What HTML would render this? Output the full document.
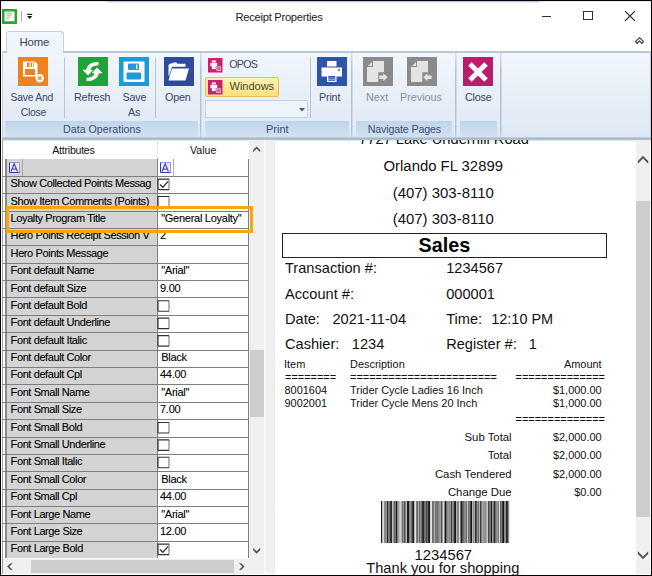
<!DOCTYPE html><html><head><meta charset="utf-8"><style>
html,body{margin:0;padding:0;width:652px;height:576px;overflow:hidden;background:#fff}
body div,body svg{position:absolute}
.t{position:absolute;white-space:nowrap;line-height:1;font-family:"Liberation Sans",sans-serif}
</style></head><body>
<div style="left:0px;top:0px;width:652px;height:576px;background:#fff"></div>
<div style="left:1px;top:1px;width:650px;height:1px;background:#e4e4e4"></div>
<div style="left:108px;top:1px;width:431px;height:1px;background:#b4c4da"></div>
<div style="left:108px;top:2px;width:431px;height:1px;background:#e8eff9"></div>
<svg style="position:absolute;left:2px;top:9px" width="15" height="15" viewBox="0 0 15 15">
<rect x="0" y="0" width="15" height="15" fill="#2ca52c"/>
<rect x="2.5" y="2.5" width="10" height="9.5" fill="#fff"/>
<path d="M2.5 12 l1.25 1 l1.25 -1 l1.25 1 l1.25 -1 l1.25 1 l1.25 -1 l1.25 1 l1.25 -1 V12.6 H2.5z" fill="#fff"/>
<rect x="4.5" y="3.8" width="5" height="1.3" fill="#9ad49a"/>
<rect x="4.5" y="5.6" width="5" height="1.3" fill="#9ad49a"/>
<rect x="4.5" y="7.4" width="3.5" height="1.2" fill="#9ad49a"/>
<rect x="4.5" y="9" width="2" height="1.1" fill="#9ad49a"/>
</svg>
<div style="left:21px;top:11px;width:1px;height:11px;background:#b0b0b0"></div>
<svg style="position:absolute;left:27px;top:13px" width="6" height="7" viewBox="0 0 6 7">
<rect x="0.2" y="0.8" width="5" height="1.1" fill="#111"/><path d="M0.2 3 H5.2 L2.7 6z" fill="#111"/></svg>
<div class="t" style="left:235.5px;top:12.00px;font-size:11.2px;color:#222;letter-spacing:-0.28px">Receipt Properties</div>
<div style="left:542px;top:16px;width:9px;height:1px;background:#333"></div>
<div style="left:583px;top:11px;width:10px;height:9px;border:1px solid #333;box-sizing:border-box"></div>
<svg style="position:absolute;left:624px;top:10px" width="12" height="12" viewBox="0 0 12 12"><path d="M1 1 L11 11 M11 1 L1 11" stroke="#333" stroke-width="1.1"/></svg>
<svg style="position:absolute;left:634px;top:36px" width="11" height="9" viewBox="0 0 11 9"><path d="M5.5 1.6 L1.5 5.7 L3.1 7.4 L5.5 5 L7.9 7.4 L9.5 5.7z" fill="#fff" stroke="#3a4048" stroke-width="1.2" stroke-linejoin="round"/></svg>
<div style="left:6px;top:31px;width:58px;height:22px;background:linear-gradient(#f3f7fc,#eef4fa);border:1px solid #c2d0df;border-bottom:none;border-radius:3px 3px 0 0;box-sizing:border-box"></div>
<div class="t" style="left:19.5px;top:37.00px;font-size:11.4px;color:#33425f;letter-spacing:-0.15px">Home</div>
<div style="left:2px;top:51px;width:649px;height:90px;background:linear-gradient(#f1f6fb 0%,#e9f0f8 40%,#dde8f4 100%);border-top:2px solid #b9c9da;box-sizing:border-box"></div>
<div style="left:64px;top:51px;width:1px;height:0px;"></div>
<div style="left:7px;top:51px;width:56px;height:3px;background:#eff4fa"></div>
<div style="left:2px;top:51px;width:1px;height:90px;background:#c5d2e0"></div>
<div style="left:650px;top:51px;width:1px;height:90px;background:#c5d2e0"></div>
<div style="left:5px;top:121px;width:193px;height:16px;background:linear-gradient(#bfd5ec,#d3e1f1)"></div>
<div style="left:205px;top:121px;width:144px;height:16px;background:linear-gradient(#bfd5ec,#d3e1f1)"></div>
<div style="left:356px;top:121px;width:96px;height:16px;background:linear-gradient(#bfd5ec,#d3e1f1)"></div>
<div style="left:460px;top:121px;width:37px;height:16px;background:linear-gradient(#bfd5ec,#d3e1f1)"></div>
<div style="left:200px;top:53px;width:1px;height:84px;background:linear-gradient(#d5e0ec,#b3c2d3 20%,#b3c2d3 90%,#c0cddc)"></div>
<div style="left:201px;top:53px;width:1px;height:84px;background:linear-gradient(#e5edf6,#cdd9e6 20%,#cdd9e6 90%,#d5e0ec)"></div>
<div style="left:351px;top:53px;width:1px;height:84px;background:linear-gradient(#d5e0ec,#b3c2d3 20%,#b3c2d3 90%,#c0cddc)"></div>
<div style="left:352px;top:53px;width:1px;height:84px;background:linear-gradient(#e5edf6,#cdd9e6 20%,#cdd9e6 90%,#d5e0ec)"></div>
<div style="left:455px;top:53px;width:1px;height:84px;background:linear-gradient(#d5e0ec,#b3c2d3 20%,#b3c2d3 90%,#c0cddc)"></div>
<div style="left:456px;top:53px;width:1px;height:84px;background:linear-gradient(#e5edf6,#cdd9e6 20%,#cdd9e6 90%,#d5e0ec)"></div>
<div style="left:500px;top:53px;width:1px;height:84px;background:linear-gradient(#d5e0ec,#b3c2d3 20%,#b3c2d3 90%,#c0cddc)"></div>
<div style="left:501px;top:53px;width:1px;height:84px;background:linear-gradient(#e5edf6,#cdd9e6 20%,#cdd9e6 90%,#d5e0ec)"></div>
<div style="left:2px;top:137px;width:649px;height:3px;background:linear-gradient(#c5d2e0,#a3b4c8 60%,#b9c6d6)"></div>
<div style="left:64px;top:58px;width:1px;height:60px;background:#b8c4d2"></div>
<div style="left:155px;top:58px;width:1px;height:60px;background:#b8c4d2"></div>
<div style="left:310px;top:58px;width:1px;height:60px;background:#b8c4d2"></div>
<div class="t" style="left:63px;top:124.00px;font-size:10.7px;color:#3f4d6a">Data Operations</div>
<div class="t" style="left:266px;top:124.00px;font-size:11px;color:#3f4d6a">Print</div>
<div class="t" style="left:367.7px;top:124.00px;font-size:10.7px;color:#3f4d6a;letter-spacing:-0.15px">Navigate Pages</div>
<div class="t" style="left:10.5px;top:93.00px;font-size:10.3px;color:#3a4766;letter-spacing:-0.2px">Save And</div>
<div class="t" style="left:20.7px;top:108.00px;font-size:10.3px;color:#3a4766;letter-spacing:-0.2px">Close</div>
<div class="t" style="left:74px;top:92.00px;font-size:10.8px;color:#3a4766;letter-spacing:-0.2px">Refresh</div>
<div class="t" style="left:122.5px;top:92.00px;font-size:10.8px;color:#3a4766;letter-spacing:-0.2px">Save</div>
<div class="t" style="left:128px;top:107.00px;font-size:10.8px;color:#3a4766;letter-spacing:-0.2px">As</div>
<div class="t" style="left:165px;top:92.00px;font-size:10.8px;color:#3a4766;letter-spacing:-0.2px">Open</div>
<div class="t" style="left:319px;top:92.00px;font-size:10.8px;color:#3a4766;letter-spacing:-0.2px">Print</div>
<div class="t" style="left:366px;top:92.00px;font-size:10.8px;color:#8a8f99">Next</div>
<div class="t" style="left:400px;top:92.00px;font-size:10.8px;color:#8a8f99">Previous</div>
<div class="t" style="left:465px;top:92.00px;font-size:10.8px;color:#3a4766;letter-spacing:-0.2px">Close</div>
<svg style="position:absolute;left:18px;top:57px" width="30" height="29" viewBox="0 0 30 29"><rect width="30" height="29" fill="#f0821e"/><path d="M5 4.5 H17 L19.5 7 V19.5 H5z" fill="#fff"/><rect x="7" y="12" width="10" height="6" fill="#f0821e"/>
<rect x="9" y="5.5" width="7" height="4.5" fill="#f0821e"/><rect x="11.5" y="5.5" width="1.3" height="4.5" fill="#fff"/><rect x="14" y="5.5" width="1.3" height="4.5" fill="#fff"/>
<circle cx="21.7" cy="21.2" r="4.2" fill="#fff"/><path d="M20 19.5 L23.4 22.9 M23.4 19.5 L20 22.9" stroke="#f0821e" stroke-width="1.2"/></svg>
<svg style="position:absolute;left:78px;top:57px" width="30" height="29" viewBox="0 0 30 29"><rect width="30" height="29" fill="#22a03a"/><path d="M20.5 5 C14 4.5 8.5 8 8.3 12.8 L4.5 12.8 L10 18.6 L15.2 12.8 L12.6 12.8 C12.8 10.2 15.5 8.6 20.5 8.2z" fill="#fff"/>
<path d="M8.5 24 C15 24.5 20.5 21 20.7 16.2 L24.5 16.2 L19 10.4 L13.8 16.2 L16.4 16.2 C16.2 18.8 13.5 20.4 8.5 20.8z" fill="#fff"/></svg>
<svg style="position:absolute;left:119px;top:57px" width="30" height="29" viewBox="0 0 30 29"><rect width="30" height="29" fill="#1e9ad6"/><rect x="4.5" y="4.5" width="21" height="20.5" rx="0.8" fill="#fff"/><rect x="9" y="6.5" width="11" height="6.5" rx="1" fill="#1e9ad6"/>
<rect x="17" y="7.5" width="1.4" height="4.5" fill="#fff"/><rect x="7.5" y="15.5" width="14.5" height="7" rx="0.8" fill="#1e9ad6"/></svg>
<svg style="position:absolute;left:164px;top:57px" width="30" height="29" viewBox="0 0 30 29"><rect width="30" height="29" fill="#2f4a9c"/><path d="M4.5 8 L6 6.5 L8 6.5 L9 5.5 L12.5 5.5 L13.5 6.8 L21.5 6.8 L21.5 9.8 L8 9.8 L5 19 L4.5 19z" fill="#fff"/>
<path d="M8 11.5 L25 11.5 L21.5 23.5 L4.5 23.5z" fill="#fff"/></svg>
<svg style="position:absolute;left:317px;top:57px" width="30" height="29" viewBox="0 0 30 29"><rect width="30" height="29" fill="#2f55a8"/><rect x="10" y="4" width="9.5" height="5.5" fill="#fff"/><rect x="4.5" y="10.5" width="20.5" height="9" fill="#fff"/>
<circle cx="22" cy="13" r="0.9" fill="#2f55a8"/><rect x="10" y="17.5" width="9.5" height="7.5" fill="#fff"/><rect x="11.3" y="19" width="7" height="4.8" fill="#2f55a8"/>
<rect x="11.3" y="20.5" width="7" height="0.8" fill="#fff" opacity="0.6"/><rect x="11.3" y="22.2" width="7" height="0.8" fill="#fff" opacity="0.6"/></svg>
<svg style="position:absolute;left:363px;top:57px" width="30" height="29" viewBox="0 0 30 29"><rect width="30" height="29" fill="#8a8a8a"/><path d="M10 4 L21 4 L21 15.2 L15.2 15.2 L15.2 25 L4 25 L4 10 L10 10z" fill="#e3e3e3"/><path d="M5 9 L9 5 L9 9z" fill="#e3e3e3"/><path d="M16.2 18.5 L20.3 18.5 L20.3 16.3 L24.6 20.3 L20.3 24.3 L20.3 22.1 L16.2 22.1z" fill="#e3e3e3"/></svg>
<svg style="position:absolute;left:407px;top:57px" width="30" height="29" viewBox="0 0 30 29"><rect width="30" height="29" fill="#8a8a8a"/><path d="M10 4 L21 4 L21 15.2 L15.2 15.2 L15.2 25 L4 25 L4 10 L10 10z" fill="#e3e3e3"/><path d="M5 9 L9 5 L9 9z" fill="#e3e3e3"/><path d="M24.6 18.5 L20.5 18.5 L20.5 16.3 L16.2 20.3 L20.5 24.3 L20.5 22.1 L24.6 22.1z" fill="#e3e3e3"/></svg>
<svg style="position:absolute;left:463px;top:57px" width="30" height="29" viewBox="0 0 30 29"><rect width="30" height="29" fill="#b81d6e"/><path d="M7 7 L23 23 M23 7 L7 23" stroke="#fff" stroke-width="5"/></svg>
<div style="left:205px;top:77px;width:74px;height:20px;background:linear-gradient(#fff3b0,#fddf7e);border:1px solid #e2bf5c;border-radius:2px;box-sizing:border-box"></div>
<svg style="position:absolute;left:208px;top:58px" width="14.5" height="14.5" viewBox="0 0 15 15"><rect width="15" height="15" fill="#cc1f6e"/>
<rect x="4" y="2.5" width="4" height="2" fill="#fff"/><rect x="2.5" y="5" width="7" height="3.5" fill="#fff"/><rect x="4" y="8.5" width="4" height="3" fill="#fff"/>
<rect x="8.5" y="8.5" width="5" height="5" fill="#e6a6c6"/><rect x="9.5" y="9.5" width="3" height="3" fill="#cc1f6e" opacity="0.5"/></svg>
<svg style="position:absolute;left:208px;top:80px" width="14.5" height="14.5" viewBox="0 0 15 15"><rect width="15" height="15" fill="#cc1f6e"/>
<rect x="4" y="2.5" width="4" height="2" fill="#fff"/><rect x="2.5" y="5" width="7" height="3.5" fill="#fff"/><rect x="4" y="8.5" width="4" height="3" fill="#fff"/>
<rect x="8.5" y="8.5" width="5" height="5" fill="#e6a6c6"/><rect x="9.5" y="9.5" width="3" height="3" fill="#cc1f6e" opacity="0.5"/></svg>
<div class="t" style="left:229.3px;top:59.00px;font-size:10.7px;color:#3a4766;letter-spacing:-0.8px">OPOS</div>
<div class="t" style="left:229.5px;top:81.00px;font-size:11px;color:#3b4a3a">Windows</div>
<div style="left:205px;top:100px;width:103px;height:18px;background:#eef4fb;border:1px solid #c3d1e0;box-sizing:border-box"></div>
<svg style="position:absolute;left:299px;top:108px" width="6" height="4" viewBox="0 0 6 4"><path d="M0 0 H6 L3 3.5z" fill="#555"/></svg>
<div style="left:2px;top:140px;width:1px;height:434px;background:#a0a0a0"></div>
<div class="t" style="left:52.3px;top:145.00px;font-size:10.6px;color:#111;letter-spacing:-0.25px">Attributes</div>
<div class="t" style="left:190px;top:145.00px;font-size:10.6px;color:#111">Value</div>
<div style="left:157px;top:140px;width:1px;height:19px;background:#e5e5e5"></div>
<div style="left:7px;top:159px;width:150px;height:399px;background:#d4d4d4"></div>
<div style="left:158px;top:159px;width:91px;height:399px;background:#fff"></div>
<div style="left:5px;top:159px;width:2px;height:399px;background:#8a8a8a"></div>
<div style="left:22px;top:159px;width:1px;height:17px;background:#a8a8a8"></div>
<div style="left:157px;top:159px;width:1px;height:399px;background:#7f7f7f"></div>
<div style="left:248px;top:159px;width:1px;height:399px;background:#7f7f7f"></div>
<div style="left:173px;top:159px;width:1px;height:17px;background:#b0b0b0"></div>
<div style="left:3px;top:176px;width:246px;height:1px;background:#7f7f7f"></div>
<div style="left:3px;top:193px;width:246px;height:1px;background:#7f7f7f"></div>
<div style="left:3px;top:211px;width:246px;height:1px;background:#7f7f7f"></div>
<div style="left:3px;top:228px;width:246px;height:1px;background:#7f7f7f"></div>
<div style="left:3px;top:245px;width:246px;height:1px;background:#7f7f7f"></div>
<div style="left:3px;top:263px;width:246px;height:1px;background:#7f7f7f"></div>
<div style="left:3px;top:280px;width:246px;height:1px;background:#7f7f7f"></div>
<div style="left:3px;top:297px;width:246px;height:1px;background:#7f7f7f"></div>
<div style="left:3px;top:315px;width:246px;height:1px;background:#7f7f7f"></div>
<div style="left:3px;top:332px;width:246px;height:1px;background:#7f7f7f"></div>
<div style="left:3px;top:350px;width:246px;height:1px;background:#7f7f7f"></div>
<div style="left:3px;top:367px;width:246px;height:1px;background:#7f7f7f"></div>
<div style="left:3px;top:384px;width:246px;height:1px;background:#7f7f7f"></div>
<div style="left:3px;top:402px;width:246px;height:1px;background:#7f7f7f"></div>
<div style="left:3px;top:419px;width:246px;height:1px;background:#7f7f7f"></div>
<div style="left:3px;top:437px;width:246px;height:1px;background:#7f7f7f"></div>
<div style="left:3px;top:454px;width:246px;height:1px;background:#7f7f7f"></div>
<div style="left:3px;top:471px;width:246px;height:1px;background:#7f7f7f"></div>
<div style="left:3px;top:489px;width:246px;height:1px;background:#7f7f7f"></div>
<div style="left:3px;top:506px;width:246px;height:1px;background:#7f7f7f"></div>
<div style="left:3px;top:523px;width:246px;height:1px;background:#7f7f7f"></div>
<div style="left:3px;top:541px;width:246px;height:1px;background:#7f7f7f"></div>
<svg style="position:absolute;left:9px;top:162px" width="11" height="11" viewBox="0 0 11 11"><rect x="0" y="0" width="11" height="11" fill="#ecece6"/><path d="M0.5 0.5 H10.5 V10.5" stroke="#9a9ae0" stroke-width="1" fill="none"/><path d="M0.5 0.5 V10.5 H10.5" stroke="#3a3aa8" stroke-width="1" fill="none"/><path d="M2 9.5 L5.2 1.8 L8.4 9.5 M3.2 7.2 H7.2" stroke="#5050d0" stroke-width="1.3" fill="none"/></svg>
<svg style="position:absolute;left:160px;top:162px" width="11" height="11" viewBox="0 0 11 11"><rect x="0" y="0" width="11" height="11" fill="#ecece6"/><path d="M0.5 0.5 H10.5 V10.5" stroke="#9a9ae0" stroke-width="1" fill="none"/><path d="M0.5 0.5 V10.5 H10.5" stroke="#3a3aa8" stroke-width="1" fill="none"/><path d="M2 9.5 L5.2 1.8 L8.4 9.5 M3.2 7.2 H7.2" stroke="#5050d0" stroke-width="1.3" fill="none"/></svg>
<div class="t" style="left:10.6px;top:178.00px;font-size:11px;color:#000;letter-spacing:-0.4px;-webkit-text-stroke:0.1px #000">Show Collected Points Messag</div>
<svg style="position:absolute;left:0;top:0" width="652" height="576" viewBox="0 0 652 576"><path d="M169 179.12 V189.62" stroke="#777" stroke-width="1.1" fill="none"/><path d="M158 189.62 V179.12 H169 M158 189.62 H169" stroke="#333" stroke-width="1.15" fill="none"/><path d="M160 184.42 L162.8 187.22 L168.2 181.42" stroke="#333" stroke-width="1.3" fill="none"/></svg>
<div class="t" style="left:10.6px;top:196.00px;font-size:11px;color:#000;letter-spacing:-0.4px;-webkit-text-stroke:0.1px #000">Show Item Comments (Points)</div>
<svg style="position:absolute;left:0;top:0" width="652" height="576" viewBox="0 0 652 576"><path d="M169 196.50 V207.00" stroke="#777" stroke-width="1.1" fill="none"/><path d="M158 207.00 V196.50 H169 M158 207.00 H169" stroke="#333" stroke-width="1.15" fill="none"/></svg>
<div class="t" style="left:10.6px;top:213.00px;font-size:11px;color:#000;letter-spacing:-0.4px;-webkit-text-stroke:0.1px #000">Loyalty Program Title</div>
<div class="t" style="left:161.2px;top:213.00px;font-size:11px;color:#000;letter-spacing:-0.27px;-webkit-text-stroke:0.1px #000">&quot;General Loyalty&quot;</div>
<div class="t" style="left:10.6px;top:230.00px;font-size:11px;color:#000;letter-spacing:-0.4px;-webkit-text-stroke:0.1px #000">Hero Points Receipt Session V</div>
<div class="t" style="left:160px;top:230.00px;font-size:11px;color:#000;letter-spacing:-0.27px;-webkit-text-stroke:0.1px #000">2</div>
<div class="t" style="left:10.6px;top:248.00px;font-size:11px;color:#000;letter-spacing:-0.4px;-webkit-text-stroke:0.1px #000">Hero Points Message</div>
<div class="t" style="left:10.6px;top:265.00px;font-size:11px;color:#000;letter-spacing:-0.4px;-webkit-text-stroke:0.1px #000">Font default Name</div>
<div class="t" style="left:161.2px;top:265.00px;font-size:11px;color:#000;letter-spacing:-0.27px;-webkit-text-stroke:0.1px #000">&quot;Arial&quot;</div>
<div class="t" style="left:10.6px;top:283.00px;font-size:11px;color:#000;letter-spacing:-0.4px;-webkit-text-stroke:0.1px #000">Font default Size</div>
<div class="t" style="left:160px;top:283.00px;font-size:11px;color:#000;letter-spacing:-0.27px;-webkit-text-stroke:0.1px #000">9.00</div>
<div class="t" style="left:10.6px;top:300.00px;font-size:11px;color:#000;letter-spacing:-0.4px;-webkit-text-stroke:0.1px #000">Font default Bold</div>
<svg style="position:absolute;left:0;top:0" width="652" height="576" viewBox="0 0 652 576"><path d="M169 300.79 V311.29" stroke="#777" stroke-width="1.1" fill="none"/><path d="M158 311.29 V300.79 H169 M158 311.29 H169" stroke="#333" stroke-width="1.15" fill="none"/></svg>
<div class="t" style="left:10.6px;top:317.00px;font-size:11px;color:#000;letter-spacing:-0.4px;-webkit-text-stroke:0.1px #000">Font default Underline</div>
<svg style="position:absolute;left:0;top:0" width="652" height="576" viewBox="0 0 652 576"><path d="M169 318.17 V328.67" stroke="#777" stroke-width="1.1" fill="none"/><path d="M158 328.67 V318.17 H169 M158 328.67 H169" stroke="#333" stroke-width="1.15" fill="none"/></svg>
<div class="t" style="left:10.6px;top:335.00px;font-size:11px;color:#000;letter-spacing:-0.4px;-webkit-text-stroke:0.1px #000">Font default Italic</div>
<svg style="position:absolute;left:0;top:0" width="652" height="576" viewBox="0 0 652 576"><path d="M169 335.55 V346.05" stroke="#777" stroke-width="1.1" fill="none"/><path d="M158 346.05 V335.55 H169 M158 346.05 H169" stroke="#333" stroke-width="1.15" fill="none"/></svg>
<div class="t" style="left:10.6px;top:352.00px;font-size:11px;color:#000;letter-spacing:-0.4px;-webkit-text-stroke:0.1px #000">Font default Color</div>
<div class="t" style="left:161.2px;top:352.00px;font-size:11px;color:#000;letter-spacing:-0.27px;-webkit-text-stroke:0.1px #000">Black</div>
<div class="t" style="left:10.6px;top:369.00px;font-size:11px;color:#000;letter-spacing:-0.4px;-webkit-text-stroke:0.1px #000">Font default Cpl</div>
<div class="t" style="left:160px;top:369.00px;font-size:11px;color:#000;letter-spacing:-0.27px;-webkit-text-stroke:0.1px #000">44.00</div>
<div class="t" style="left:10.6px;top:387.00px;font-size:11px;color:#000;letter-spacing:-0.4px;-webkit-text-stroke:0.1px #000">Font Small Name</div>
<div class="t" style="left:161.2px;top:387.00px;font-size:11px;color:#000;letter-spacing:-0.27px;-webkit-text-stroke:0.1px #000">&quot;Arial&quot;</div>
<div class="t" style="left:10.6px;top:404.00px;font-size:11px;color:#000;letter-spacing:-0.4px;-webkit-text-stroke:0.1px #000">Font Small Size</div>
<div class="t" style="left:160px;top:404.00px;font-size:11px;color:#000;letter-spacing:-0.27px;-webkit-text-stroke:0.1px #000">7.00</div>
<div class="t" style="left:10.6px;top:422.00px;font-size:11px;color:#000;letter-spacing:-0.4px;-webkit-text-stroke:0.1px #000">Font Small Bold</div>
<svg style="position:absolute;left:0;top:0" width="652" height="576" viewBox="0 0 652 576"><path d="M169 422.45 V432.95" stroke="#777" stroke-width="1.1" fill="none"/><path d="M158 432.95 V422.45 H169 M158 432.95 H169" stroke="#333" stroke-width="1.15" fill="none"/></svg>
<div class="t" style="left:10.6px;top:439.00px;font-size:11px;color:#000;letter-spacing:-0.4px;-webkit-text-stroke:0.1px #000">Font Small Underline</div>
<svg style="position:absolute;left:0;top:0" width="652" height="576" viewBox="0 0 652 576"><path d="M169 439.84 V450.34" stroke="#777" stroke-width="1.1" fill="none"/><path d="M158 450.34 V439.84 H169 M158 450.34 H169" stroke="#333" stroke-width="1.15" fill="none"/></svg>
<div class="t" style="left:10.6px;top:456.00px;font-size:11px;color:#000;letter-spacing:-0.4px;-webkit-text-stroke:0.1px #000">Font Small Italic</div>
<svg style="position:absolute;left:0;top:0" width="652" height="576" viewBox="0 0 652 576"><path d="M169 457.22 V467.72" stroke="#777" stroke-width="1.1" fill="none"/><path d="M158 467.72 V457.22 H169 M158 467.72 H169" stroke="#333" stroke-width="1.15" fill="none"/></svg>
<div class="t" style="left:10.6px;top:474.00px;font-size:11px;color:#000;letter-spacing:-0.4px;-webkit-text-stroke:0.1px #000">Font Small Color</div>
<div class="t" style="left:161.2px;top:474.00px;font-size:11px;color:#000;letter-spacing:-0.27px;-webkit-text-stroke:0.1px #000">Black</div>
<div class="t" style="left:10.6px;top:491.00px;font-size:11px;color:#000;letter-spacing:-0.4px;-webkit-text-stroke:0.1px #000">Font Small Cpl</div>
<div class="t" style="left:160px;top:491.00px;font-size:11px;color:#000;letter-spacing:-0.27px;-webkit-text-stroke:0.1px #000">44.00</div>
<div class="t" style="left:10.6px;top:509.00px;font-size:11px;color:#000;letter-spacing:-0.4px;-webkit-text-stroke:0.1px #000">Font Large Name</div>
<div class="t" style="left:161.2px;top:509.00px;font-size:11px;color:#000;letter-spacing:-0.27px;-webkit-text-stroke:0.1px #000">&quot;Arial&quot;</div>
<div class="t" style="left:10.6px;top:526.00px;font-size:11px;color:#000;letter-spacing:-0.4px;-webkit-text-stroke:0.1px #000">Font Large Size</div>
<div class="t" style="left:160px;top:526.00px;font-size:11px;color:#000;letter-spacing:-0.27px;-webkit-text-stroke:0.1px #000">12.00</div>
<div class="t" style="left:10.6px;top:543.00px;font-size:11px;color:#000;letter-spacing:-0.4px;-webkit-text-stroke:0.1px #000">Font Large Bold</div>
<svg style="position:absolute;left:0;top:0" width="652" height="576" viewBox="0 0 652 576"><path d="M169 544.12 V554.62" stroke="#777" stroke-width="1.1" fill="none"/><path d="M158 554.62 V544.12 H169 M158 554.62 H169" stroke="#333" stroke-width="1.15" fill="none"/><path d="M160 549.42 L162.8 552.22 L168.2 546.42" stroke="#333" stroke-width="1.3" fill="none"/></svg>
<div style="left:249px;top:140px;width:15px;height:434px;background:#f0f0f0"></div>
<div style="left:250px;top:350px;width:14px;height:67px;background:#cdcdcd"></div>
<svg style="position:absolute;left:0;top:0" width="652" height="576" viewBox="0 0 652 576"><path d="M256.65 146.40 L260.20 149.95 L260.20 152.25 L256.65 148.70 L253.10 152.25 L253.10 149.95z" fill="#555"/></svg>
<svg style="position:absolute;left:0;top:0" width="652" height="576" viewBox="0 0 652 576"><path d="M256.65 553.70 L260.20 550.15 L260.20 547.75 L256.65 551.30 L253.10 547.75 L253.10 550.15z" fill="#555"/></svg>
<div style="left:3px;top:559px;width:246px;height:15px;background:#f0f0f0"></div>
<div style="left:31px;top:560px;width:203px;height:13px;background:#cdcdcd"></div>
<svg style="position:absolute;left:0;top:0" width="652" height="576" viewBox="0 0 652 576"><path d="M7.10 566.60 L10.55 563.15 L12.75 563.15 L9.30 566.60 L12.75 570.05 L10.55 570.05z" fill="#555"/></svg>
<svg style="position:absolute;left:0;top:0" width="652" height="576" viewBox="0 0 652 576"><path d="M244.60 566.60 L241.15 563.15 L238.95 563.15 L242.40 566.60 L238.95 570.05 L241.15 570.05z" fill="#555"/></svg>
<div style="left:6px;top:206px;width:247px;height:27px;border:3px solid #f6a70f;box-sizing:border-box"></div>
<div style="left:264px;top:140px;width:2px;height:434px;background:#f8f8f8"></div>
<div style="left:266px;top:140px;width:9px;height:434px;background:linear-gradient(90deg,#f0f0f0 70%,#ebebeb)"></div>
<div style="left:0;top:140px;width:652px;height:436px;overflow:hidden"><div style="position:absolute;left:0;top:-140px;width:652px;height:576px">
<div class="t" style="left:144px;width:600px;text-align:center;top:132.00px;font-size:14.7px;color:#111">7727 Lake Underhill Road</div>
<div class="t" style="left:143.25px;width:600px;text-align:center;top:159.00px;font-size:14.9px;color:#111">Orlando FL 32899</div>
<div class="t" style="left:143.25px;width:600px;text-align:center;top:186.00px;font-size:14.95px;color:#111">(407) 303-8110</div>
<div class="t" style="left:143.25px;width:600px;text-align:center;top:212.00px;font-size:14.95px;color:#111">(407) 303-8110</div>
<div style="left:282px;top:233px;width:325px;height:25px;border:1.5px solid #222;box-sizing:border-box"></div>
<div class="t" style="left:144.3px;width:600px;text-align:center;top:236.00px;font-size:19.8px;color:#000;font-weight:bold">Sales</div>
<div class="t" style="left:285px;top:261.00px;font-size:14.6px;color:#111">Transaction #:</div>
<div class="t" style="left:446.2px;top:261.00px;font-size:14.6px;color:#111">1234567</div>
<div class="t" style="left:285px;top:287.00px;font-size:14.6px;color:#111">Account #:</div>
<div class="t" style="left:446.2px;top:287.00px;font-size:14.6px;color:#111">000001</div>
<div class="t" style="left:285px;top:312.00px;font-size:14.6px;color:#111">Date:</div>
<div class="t" style="left:332.5px;top:312.00px;font-size:14.6px;color:#111">2021-11-04</div>
<div class="t" style="left:446.2px;top:312.00px;font-size:14.6px;color:#111">Time:</div>
<div class="t" style="left:491.3px;top:312.00px;font-size:14.45px;color:#111">12:10 PM</div>
<div class="t" style="left:285px;top:337.00px;font-size:14.6px;color:#111">Cashier:</div>
<div class="t" style="left:351.8px;top:337.00px;font-size:14.6px;color:#111">1234</div>
<div class="t" style="left:446.2px;top:337.00px;font-size:14.6px;color:#111">Register #:</div>
<div class="t" style="left:528.8px;top:337.00px;font-size:14.6px;color:#111">1</div>
<div class="t" style="left:284px;top:359.00px;font-size:10.95px;color:#111">Item</div>
<div class="t" style="left:350px;top:359.00px;font-size:10.95px;color:#111">Description</div>
<div class="t" style="right:50.39999999999998px;top:359.00px;font-size:10.95px;color:#111">Amount</div>
<div class="t" style="left:285px;top:372.00px;font-size:10.95px;color:#111">========</div>
<div class="t" style="left:350px;top:372.00px;font-size:10.95px;color:#111">=======================</div>
<div class="t" style="right:47px;top:372.00px;font-size:10.95px;color:#111">==============</div>
<div class="t" style="left:284.5px;top:385.00px;font-size:10.95px;color:#111">8001604</div>
<div class="t" style="left:350px;top:385.00px;font-size:10.95px;color:#111">Trider Cycle Ladies 16 Inch</div>
<div class="t" style="right:50.39999999999998px;top:385.00px;font-size:10.95px;color:#111">$1,000.00</div>
<div class="t" style="left:284.5px;top:398.00px;font-size:10.95px;color:#111">9002001</div>
<div class="t" style="left:350px;top:398.00px;font-size:10.95px;color:#111">Trider Cycle Mens 20 Inch</div>
<div class="t" style="right:50.39999999999998px;top:398.00px;font-size:10.95px;color:#111">$1,000.00</div>
<div class="t" style="right:47px;top:414.00px;font-size:10.95px;color:#111">==============</div>
<div class="t" style="right:140.39999999999998px;top:432.00px;font-size:11.35px;color:#111">Sub Total</div>
<div class="t" style="right:50.39999999999998px;top:432.00px;font-size:10.95px;color:#111">$2,000.00</div>
<div class="t" style="right:140.39999999999998px;top:450.00px;font-size:11.35px;color:#111">Total</div>
<div class="t" style="right:50.39999999999998px;top:450.00px;font-size:10.95px;color:#111">$2,000.00</div>
<div class="t" style="right:140.39999999999998px;top:469.00px;font-size:11.35px;color:#111">Cash Tendered</div>
<div class="t" style="right:50.39999999999998px;top:469.00px;font-size:10.95px;color:#111">$2,000.00</div>
<div class="t" style="right:140.39999999999998px;top:487.00px;font-size:11.35px;color:#111">Change Due</div>
<div class="t" style="right:50.39999999999998px;top:487.00px;font-size:10.95px;color:#111">$0.00</div>
<svg style="position:absolute;left:381px;top:501px" width="129" height="42" viewBox="0 0 129 42" shape-rendering="crispEdges"><rect x="0" y="0" width="1" height="42" fill="rgb(30,30,30)"/><rect x="1" y="0" width="1" height="42" fill="rgb(190,190,190)"/><rect x="2" y="0" width="1" height="42" fill="rgb(220,220,220)"/><rect x="3" y="0" width="1" height="42" fill="rgb(140,140,140)"/><rect x="4" y="0" width="1" height="42" fill="rgb(130,130,130)"/><rect x="5" y="0" width="1" height="42" fill="rgb(150,150,150)"/><rect x="6" y="0" width="1" height="42" fill="rgb(40,40,40)"/><rect x="7" y="0" width="1" height="42" fill="rgb(130,130,130)"/><rect x="8" y="0" width="1" height="42" fill="rgb(110,110,110)"/><rect x="9" y="0" width="1" height="42" fill="rgb(60,60,60)"/><rect x="10" y="0" width="1" height="42" fill="rgb(40,40,40)"/><rect x="11" y="0" width="1" height="42" fill="rgb(190,190,190)"/><rect x="12" y="0" width="1" height="42" fill="rgb(150,150,150)"/><rect x="13" y="0" width="1" height="42" fill="rgb(100,100,100)"/><rect x="14" y="0" width="1" height="42" fill="rgb(120,120,120)"/><rect x="15" y="0" width="1" height="42" fill="rgb(30,30,30)"/><rect x="16" y="0" width="1" height="42" fill="rgb(130,130,130)"/><rect x="17" y="0" width="1" height="42" fill="rgb(160,160,160)"/><rect x="18" y="0" width="1" height="42" fill="rgb(190,190,190)"/><rect x="19" y="0" width="1" height="42" fill="rgb(210,210,210)"/><rect x="20" y="0" width="1" height="42" fill="rgb(180,180,180)"/><rect x="21" y="0" width="1" height="42" fill="rgb(110,110,110)"/><rect x="22" y="0" width="1" height="42" fill="rgb(150,150,150)"/><rect x="23" y="0" width="1" height="42" fill="rgb(80,80,80)"/><rect x="24" y="0" width="1" height="42" fill="rgb(130,130,130)"/><rect x="25" y="0" width="1" height="42" fill="rgb(190,190,190)"/><rect x="26" y="0" width="1" height="42" fill="rgb(30,30,30)"/><rect x="27" y="0" width="1" height="42" fill="rgb(30,30,30)"/><rect x="28" y="0" width="1" height="42" fill="rgb(130,130,130)"/><rect x="29" y="0" width="1" height="42" fill="rgb(150,150,150)"/><rect x="30" y="0" width="1" height="42" fill="rgb(110,110,110)"/><rect x="31" y="0" width="1" height="42" fill="rgb(60,60,60)"/><rect x="32" y="0" width="1" height="42" fill="rgb(30,30,30)"/><rect x="33" y="0" width="1" height="42" fill="rgb(180,180,180)"/><rect x="34" y="0" width="1" height="42" fill="rgb(230,230,230)"/><rect x="35" y="0" width="1" height="42" fill="rgb(130,130,130)"/><rect x="36" y="0" width="1" height="42" fill="rgb(110,110,110)"/><rect x="37" y="0" width="1" height="42" fill="rgb(170,170,170)"/><rect x="38" y="0" width="1" height="42" fill="rgb(110,110,110)"/><rect x="39" y="0" width="1" height="42" fill="rgb(140,140,140)"/><rect x="40" y="0" width="1" height="42" fill="rgb(120,120,120)"/><rect x="41" y="0" width="1" height="42" fill="rgb(50,50,50)"/><rect x="42" y="0" width="1" height="42" fill="rgb(40,40,40)"/><rect x="43" y="0" width="1" height="42" fill="rgb(110,110,110)"/><rect x="44" y="0" width="1" height="42" fill="rgb(120,120,120)"/><rect x="45" y="0" width="1" height="42" fill="rgb(70,70,70)"/><rect x="46" y="0" width="1" height="42" fill="rgb(110,110,110)"/><rect x="47" y="0" width="1" height="42" fill="rgb(40,40,40)"/><rect x="48" y="0" width="1" height="42" fill="rgb(30,30,30)"/><rect x="49" y="0" width="1" height="42" fill="rgb(210,210,210)"/><rect x="50" y="0" width="1" height="42" fill="rgb(230,230,230)"/><rect x="51" y="0" width="1" height="42" fill="rgb(110,110,110)"/><rect x="52" y="0" width="1" height="42" fill="rgb(120,120,120)"/><rect x="53" y="0" width="1" height="42" fill="rgb(170,170,170)"/><rect x="54" y="0" width="1" height="42" fill="rgb(120,120,120)"/><rect x="55" y="0" width="1" height="42" fill="rgb(120,120,120)"/><rect x="56" y="0" width="1" height="42" fill="rgb(110,110,110)"/><rect x="57" y="0" width="1" height="42" fill="rgb(130,130,130)"/><rect x="58" y="0" width="1" height="42" fill="rgb(150,150,150)"/><rect x="59" y="0" width="1" height="42" fill="rgb(160,160,160)"/><rect x="60" y="0" width="1" height="42" fill="rgb(80,80,80)"/><rect x="61" y="0" width="1" height="42" fill="rgb(150,150,150)"/><rect x="62" y="0" width="1" height="42" fill="rgb(220,220,220)"/><rect x="63" y="0" width="1" height="42" fill="rgb(130,130,130)"/><rect x="64" y="0" width="1" height="42" fill="rgb(20,20,20)"/><rect x="65" y="0" width="1" height="42" fill="rgb(110,110,110)"/><rect x="66" y="0" width="1" height="42" fill="rgb(140,140,140)"/><rect x="67" y="0" width="1" height="42" fill="rgb(150,150,150)"/><rect x="68" y="0" width="1" height="42" fill="rgb(140,140,140)"/><rect x="69" y="0" width="1" height="42" fill="rgb(150,150,150)"/><rect x="70" y="0" width="1" height="42" fill="rgb(60,60,60)"/><rect x="71" y="0" width="1" height="42" fill="rgb(140,140,140)"/><rect x="72" y="0" width="1" height="42" fill="rgb(130,130,130)"/><rect x="73" y="0" width="1" height="42" fill="rgb(40,40,40)"/><rect x="74" y="0" width="1" height="42" fill="rgb(30,30,30)"/><rect x="75" y="0" width="1" height="42" fill="rgb(180,180,180)"/><rect x="76" y="0" width="1" height="42" fill="rgb(130,130,130)"/><rect x="77" y="0" width="1" height="42" fill="rgb(140,140,140)"/><rect x="78" y="0" width="1" height="42" fill="rgb(220,220,220)"/><rect x="79" y="0" width="1" height="42" fill="rgb(120,120,120)"/><rect x="80" y="0" width="1" height="42" fill="rgb(30,30,30)"/><rect x="81" y="0" width="1" height="42" fill="rgb(90,90,90)"/><rect x="82" y="0" width="1" height="42" fill="rgb(110,110,110)"/><rect x="83" y="0" width="1" height="42" fill="rgb(140,140,140)"/><rect x="84" y="0" width="1" height="42" fill="rgb(140,140,140)"/><rect x="85" y="0" width="1" height="42" fill="rgb(110,110,110)"/><rect x="86" y="0" width="1" height="42" fill="rgb(200,200,200)"/><rect x="87" y="0" width="1" height="42" fill="rgb(110,110,110)"/><rect x="88" y="0" width="1" height="42" fill="rgb(130,130,130)"/><rect x="89" y="0" width="1" height="42" fill="rgb(70,70,70)"/><rect x="90" y="0" width="1" height="42" fill="rgb(20,20,20)"/><rect x="91" y="0" width="1" height="42" fill="rgb(180,180,180)"/><rect x="92" y="0" width="1" height="42" fill="rgb(140,140,140)"/><rect x="93" y="0" width="1" height="42" fill="rgb(170,170,170)"/><rect x="94" y="0" width="1" height="42" fill="rgb(50,50,50)"/><rect x="95" y="0" width="1" height="42" fill="rgb(90,90,90)"/><rect x="96" y="0" width="1" height="42" fill="rgb(140,140,140)"/><rect x="97" y="0" width="1" height="42" fill="rgb(110,110,110)"/><rect x="98" y="0" width="1" height="42" fill="rgb(180,180,180)"/><rect x="99" y="0" width="1" height="42" fill="rgb(60,60,60)"/><rect x="100" y="0" width="1" height="42" fill="rgb(120,120,120)"/><rect x="101" y="0" width="1" height="42" fill="rgb(170,170,170)"/><rect x="102" y="0" width="1" height="42" fill="rgb(150,150,150)"/><rect x="103" y="0" width="1" height="42" fill="rgb(150,150,150)"/><rect x="104" y="0" width="1" height="42" fill="rgb(140,140,140)"/><rect x="105" y="0" width="1" height="42" fill="rgb(170,170,170)"/><rect x="106" y="0" width="1" height="42" fill="rgb(200,200,200)"/><rect x="107" y="0" width="1" height="42" fill="rgb(70,70,70)"/><rect x="108" y="0" width="1" height="42" fill="rgb(120,120,120)"/><rect x="109" y="0" width="1" height="42" fill="rgb(110,110,110)"/><rect x="110" y="0" width="1" height="42" fill="rgb(30,30,30)"/><rect x="111" y="0" width="1" height="42" fill="rgb(150,150,150)"/><rect x="112" y="0" width="1" height="42" fill="rgb(120,120,120)"/><rect x="113" y="0" width="1" height="42" fill="rgb(40,40,40)"/><rect x="114" y="0" width="1" height="42" fill="rgb(110,110,110)"/><rect x="115" y="0" width="1" height="42" fill="rgb(140,140,140)"/><rect x="116" y="0" width="1" height="42" fill="rgb(150,150,150)"/><rect x="117" y="0" width="1" height="42" fill="rgb(130,130,130)"/><rect x="118" y="0" width="1" height="42" fill="rgb(220,220,220)"/><rect x="119" y="0" width="1" height="42" fill="rgb(100,100,100)"/><rect x="120" y="0" width="1" height="42" fill="rgb(130,130,130)"/><rect x="121" y="0" width="1" height="42" fill="rgb(60,60,60)"/><rect x="122" y="0" width="1" height="42" fill="rgb(20,20,20)"/><rect x="123" y="0" width="1" height="42" fill="rgb(140,140,140)"/><rect x="124" y="0" width="1" height="42" fill="rgb(140,140,140)"/><rect x="125" y="0" width="1" height="42" fill="rgb(40,40,40)"/><rect x="126" y="0" width="1" height="42" fill="rgb(60,60,60)"/><rect x="127" y="0" width="1" height="42" fill="rgb(140,140,140)"/><rect x="128" y="0" width="1" height="42" fill="rgb(230,230,230)"/></svg>
<div class="t" style="left:143.3px;width:600px;text-align:center;top:548.00px;font-size:14.8px;color:#111">1234567</div>
<div class="t" style="left:142.8px;width:600px;text-align:center;top:561.00px;font-size:14.65px;color:#111">Thank you for shopping</div>
</div></div>
<div style="left:636px;top:140px;width:14px;height:434px;background:#f0f0f0"></div>
<div style="left:636px;top:201px;width:14px;height:316px;background:#cdcdcd"></div>
<svg style="position:absolute;left:0;top:0" width="652" height="576" viewBox="0 0 652 576"><path d="M643.00 155.70 L648.20 160.90 L648.20 163.70 L643.00 158.50 L637.80 163.70 L637.80 160.90z" fill="#555"/></svg>
<svg style="position:absolute;left:0;top:0" width="652" height="576" viewBox="0 0 652 576"><path d="M643.00 559.30 L648.20 554.10 L648.20 551.30 L643.00 556.50 L637.80 551.30 L637.80 554.10z" fill="#555"/></svg>
<div style="left:0px;top:0px;width:652px;height:1px;background:#000"></div>
<div style="left:0px;top:0px;width:1px;height:576px;background:#000"></div>
<div style="left:651px;top:0px;width:1px;height:576px;background:#000"></div>
<div style="left:0px;top:575px;width:652px;height:1px;background:#000"></div>
</body></html>
